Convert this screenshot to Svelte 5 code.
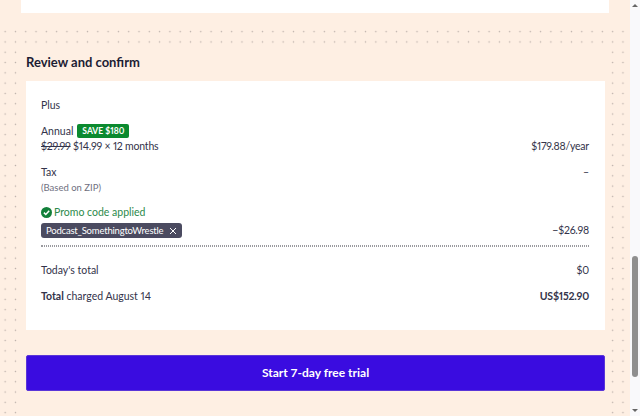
<script lang="ts">
	const promo = 'Podcast_SomethingtoWrestle';
</script>

<div class="page">
	<div class="content">
		<div class="top">
			<div class="prev-card"></div>
		</div>
		<main>
			<h2>Review and confirm</h2>
			<section class="card">
				<p class="plan">Plus</p>
				<div class="billing">
					<div class="term">
						<span>Annual</span>
						<span class="badge">SAVE $180</span>
					</div>
					<div class="row">
						<span class="num"><s>$29.99</s> $14.99 × 12 months</span>
						<span class="num">$179.88/year</span>
					</div>
				</div>
				<div class="tax">
					<div class="row">
						<span>Tax</span>
						<span>–</span>
					</div>
					<small>(Based on ZIP)</small>
				</div>
				<div class="promo">
					<div class="applied">
						<svg width="11" height="11" viewBox="0 0 11 11">
							<circle cx="5.5" cy="5.5" r="5.5" fill="#12803a" />
							<path d="M2.9 5.6l1.9 1.9 3.4-3.7" fill="none" stroke="#fff" stroke-width="1.5" />
						</svg>
						<span>Promo code applied</span>
					</div>
					<div class="row chip-row">
						<span class="chip">
							<span>{promo}</span>
							<svg width="8" height="8" viewBox="0 0 8 8">
								<path d="M1 1l6 6M7 1l-6 6" stroke="#fff" stroke-width="1" />
							</svg>
						</span>
						<span class="num">−$26.98</span>
					</div>
				</div>
				<div class="rule"></div>
				<div class="row today">
					<span>Today's total</span>
					<span class="num">$0</span>
				</div>
				<div class="row total">
					<span><b>Total</b> charged August 14</span>
					<b class="num">US$152.90</b>
				</div>
			</section>
			<button><span>Start 7-day free trial</span></button>
		</main>
	</div>
	<div class="scrollbar">
		<i class="up"></i>
		<div class="track"><div class="thumb"></div></div>
		<i class="down"></i>
	</div>
</div>

<style>
	:global(body) {
		margin: 0;
	}

	.page {
		display: flex;
		width: 640px;
		height: 416px;
		overflow: hidden;
		font-family: Lato, sans-serif;
		font-size: 10.5px;
		font-variant-numeric: proportional-nums;
		color: #33334a;
	}

	.num {
		letter-spacing: -0.2px;
	}

	.content {
		flex: 1;
		display: flex;
		flex-direction: column;
		background-color: #feefe3;
		background-image: radial-gradient(circle, #b9aea8 0.7px, transparent 1px);
		background-size: 10.3px 10.3px;
		background-position: 0 -4.4px;
	}

	.top {
		height: 28px;
		padding: 0 21px;
		box-sizing: border-box;
		background: #feefe3;
	}

	.prev-card {
		height: 13px;
		background: #fff;
	}

	main {
		flex: 1;
		margin: 19px 20px 0 21px;
		padding: 0 5px;
		background: #feefe3;
	}

	h2 {
		margin: 0;
		height: 34px;
		font-size: 13px;
		line-height: 31px;
		font-weight: 700;
		color: #1d1d33;
	}

	.card {
		height: 249px;
		box-sizing: border-box;
		padding: 17px 16px 0 15px;
		background: #fff;
	}

	.plan {
		margin: 0;
		line-height: 15px;
	}

	.billing {
		margin-top: 11px;
	}

	.term {
		display: flex;
		align-items: center;
		gap: 4px;
		height: 14px;
	}

	.badge {
		display: inline-block;
		padding: 0 5px;
		line-height: 14px;
		font-size: 8.5px;
		font-weight: 700;
		color: #fff;
		background: #0b8a2f;
		border-radius: 2px;
	}

	.row {
		display: flex;
		justify-content: space-between;
		align-items: center;
		line-height: 15px;
	}

	.billing .row {
		margin-top: 1px;
	}

	.tax {
		margin-top: 11px;
	}

	small {
		display: block;
		margin-top: 0;
		font-size: 9.5px;
		line-height: 15px;
		color: #6f6f80;
	}

	.promo {
		margin-top: 10px;
	}

	.applied {
		display: flex;
		align-items: center;
		gap: 2px;
		line-height: 15px;
		color: #2c8a4b;
	}

	.chip-row {
		margin-top: 3px;
	}

	.chip {
		display: flex;
		align-items: center;
		justify-content: space-between;
		width: 141px;
		height: 15px;
		box-sizing: border-box;
		padding: 0 5px;
		font-size: 9.5px;
		letter-spacing: -0.2px;
		color: #fff;
		background: #4b4b60;
		border-radius: 3px;
	}

	.rule {
		height: 2px;
		margin-top: 7px;
		border-top: 1px dotted #9a9a9f;
		border-bottom: 1px dotted #9a9a9f;
		box-sizing: border-box;
	}

	.today {
		margin-top: 16px;
	}

	.total {
		margin-top: 11px;
	}

	button {
		display: block;
		width: 100%;
		height: 36px;
		margin-top: 25px;
		padding: 0 0 2px;
		font: 700 12px Lato, sans-serif;
		color: #fff;
		background: #3a0ce0;
		border: 1px solid #5a35d8;
		border-radius: 2px;
	}

	.scrollbar {
		width: 10px;
		display: flex;
		flex-direction: column;
		background: #f9f9fb;
	}

	.track {
		flex: 1;
		padding-top: 245px;
	}

	.thumb {
		width: 6px;
		height: 121px;
		margin-left: 2px;
		border-radius: 3px;
		background: #8f8f8f;
	}

	.up,
	.down {
		display: block;
		width: 0;
		margin: 4px auto;
		border-left: 3px solid transparent;
		border-right: 3px solid transparent;
	}

	.up {
		border-bottom: 3px solid #666;
	}

	.down {
		border-top: 3px solid #666;
	}
</style>
